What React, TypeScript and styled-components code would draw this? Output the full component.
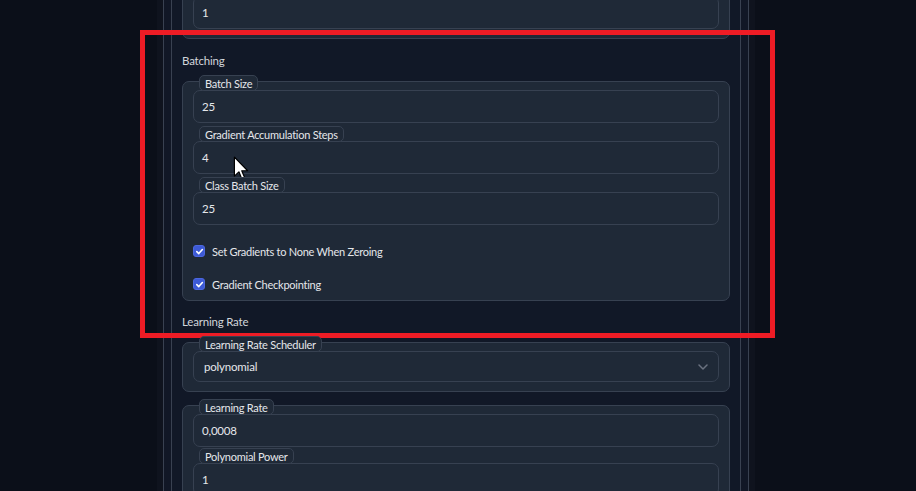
import React from "react";
import styled, { createGlobalStyle } from "styled-components";

const Global = createGlobalStyle`
  html, body { margin: 0; padding: 0; background: #0b0f19; overflow: hidden; }
  body { font-family: "Lato", "Noto Sans", sans-serif; }
  * { box-sizing: border-box; }
`;

const Page = styled.div`
  position: relative;
  width: 916px;
  height: 491px;
  overflow: hidden;
  background: #0b0f19;
`;

const Column = styled.div`
  margin-left: 157px;
  width: 598px;
  height: 100%;
  padding: 0 6px;
  background: #0f131e;
`;

const Frame = styled.div`
  height: 100%;
  border-left: 1px solid #394151;
  border-right: 1px solid #394151;
  padding: 0 7px;
  background: #111726;
`;

const Inner = styled.div`
  height: 100%;
  border-left: 1px solid #394151;
  border-right: 1px solid #394151;
  background: #111827;
  padding: 0 10px;
  display: flex;
  flex-direction: column;
`;

const Block = styled.div<{ $offset?: number; $bottom?: number }>`
  position: relative;
  margin-top: ${(p) => p.$offset ?? 0}px;
  border: 1px solid #374151;
  border-radius: 7px;
  background: #1f2937;
  padding: 0 10px ${(p) => p.$bottom ?? 9}px;
  display: flex;
  flex-direction: column;
  flex-shrink: 0;
`;

const Heading = styled.div<{ $h?: number }>`
  height: ${(p) => p.$h ?? 42}px;
  flex-shrink: 0;
  display: flex;
  align-items: center;
  font-size: 11.5px;
  letter-spacing: -0.2px;
  color: #d1d5db;
`;

const Field = styled.div<{ $first?: boolean; $gap?: number }>`
  display: flex;
  flex-direction: column;
  margin-top: ${(p) => (p.$first ? -7 : p.$gap ?? 3)}px;
`;

const Chip = styled.span`
  position: relative;
  z-index: 1;
  align-self: flex-start;
  margin-left: 6px;
  height: 16px;
  display: inline-flex;
  align-items: center;
  padding: 0 5px;
  border: 1px solid #374151;
  border-radius: 5px;
  background: #1f2937;
  font-size: 11px;
  letter-spacing: -0.25px;
  color: #e5e7eb;
  white-space: nowrap;
`;

const Input = styled.div<{ $h?: number; $pad?: number; $top?: number }>`
  margin-top: ${(p) => p.$top ?? -1}px;
  height: ${(p) => p.$h ?? 33}px;
  border: 1px solid #374151;
  border-radius: 7px;
  background: #1f2937;
  padding: 0 ${(p) => p.$pad ?? 8}px;
  display: flex;
  align-items: center;
  justify-content: space-between;
  font-size: 11.5px;
  letter-spacing: -0.2px;
  color: #e5e7eb;
`;

const CheckRow = styled.div<{ $gap: number }>`
  margin-top: ${(p) => p.$gap}px;
  height: 18px;
  display: flex;
  align-items: center;
  gap: 7px;
  font-size: 11px;
  letter-spacing: -0.25px;
  color: #e5e7eb;
`;

const Box = styled.span`
  width: 12px;
  height: 12px;
  border-radius: 3px;
  background: #3d5ad6;
  border: 1px solid #4c67e0;
  display: inline-flex;
  align-items: center;
  justify-content: center;
`;

const Gap = styled.div<{ $h: number }>`
  height: ${(p) => p.$h}px;
  flex-shrink: 0;
`;

const Highlight = styled.div`
  position: absolute;
  left: 140px;
  top: 30px;
  width: 635px;
  height: 308px;
  border: 5px solid #ee1c25;
  pointer-events: none;
`;

const Cursor = styled.svg`
  position: absolute;
  left: 233px;
  top: 156px;
  pointer-events: none;
`;

const Check = () => (
  <Box>
    <svg width="9" height="9" viewBox="0 0 10 10">
      <path d="M2 5.2 L4.2 7.3 L8.2 2.8" fill="none" stroke="#fff" strokeWidth="1.8" strokeLinecap="round" strokeLinejoin="round" />
    </svg>
  </Box>
);

const Chevron = () => (
  <svg width="10" height="6" viewBox="0 0 10 6">
    <path d="M1 1 L5 5 L9 1" fill="none" stroke="#6b7280" strokeWidth="1.5" strokeLinecap="round" strokeLinejoin="round" />
  </svg>
);

const TextField = ({ label, value, first, gap }: { label: string; value: string; first?: boolean; gap?: number }) => (
  <Field $first={first} $gap={gap}>
    <Chip>{label}</Chip>
    <Input>{value}</Input>
  </Field>
);

export default function App() {
  return (
    <Page>
      <Global />
      <Column>
        <Frame>
          <Inner>
            <Block $offset={-14}>
              <Input $top={9}>1</Input>
            </Block>
            <Heading>Batching</Heading>
            <Block $bottom={7}>
              <TextField first label="Batch Size" value="25" />
              <TextField label="Gradient Accumulation Steps" value="4" />
              <TextField label="Class Batch Size" value="25" />
              <CheckRow $gap={17}>
                <Check />
                Set Gradients to None When Zeroing
              </CheckRow>
              <CheckRow $gap={15}>
                <Check />
                Gradient Checkpointing
              </CheckRow>
            </Block>
            <Heading $h={41}>Learning Rate</Heading>
            <Block $bottom={9}>
              <Field $first>
                <Chip>Learning Rate Scheduler</Chip>
                <Input $h={31} $pad={10}>
                  polynomial
                  <Chevron />
                </Input>
              </Field>
            </Block>
            <Gap $h={13} />
            <Block>
              <TextField first label="Learning Rate" value="0,0008" />
              <TextField gap={1} label="Polynomial Power" value="1" />
            </Block>
          </Inner>
        </Frame>
      </Column>
      <Highlight />
      <Cursor width="17" height="26" viewBox="0 0 14 22">
        <path d="M1 1 L1 17 L4.8 13.4 L7.4 19.6 L9.8 18.6 L7.2 12.5 L12.2 12.5 Z" fill="#fff" stroke="#000" strokeWidth="1" strokeLinejoin="round" />
      </Cursor>
    </Page>
  );
}
